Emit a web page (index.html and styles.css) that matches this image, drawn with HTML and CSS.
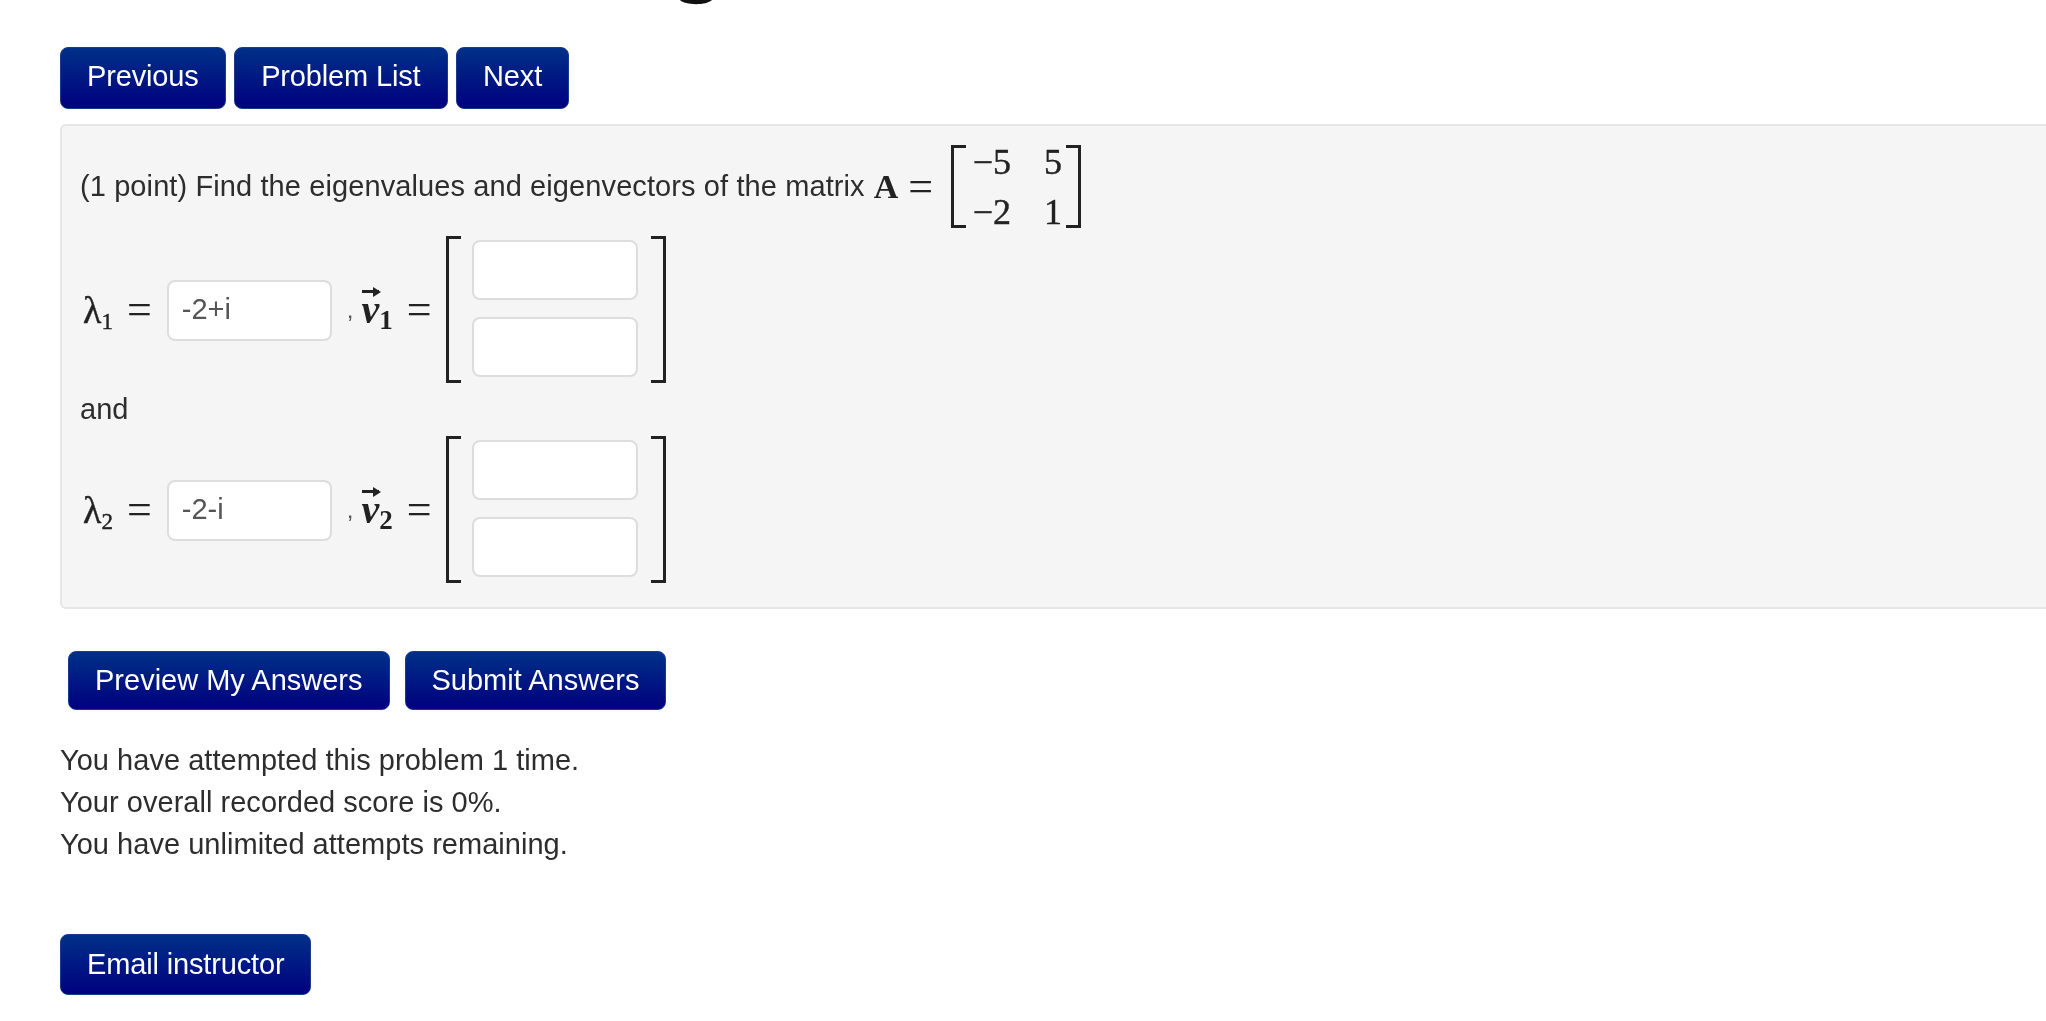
FILE: index.html
```html
<!DOCTYPE html>
<html lang="en">
<head>
<meta charset="utf-8">
<title>Problem</title>
<link rel="stylesheet" href="styles.css">
</head>
<body>
<div class="page">
  <svg class="descender" width="34" height="5" viewBox="0 0 34 5" aria-hidden="true"><path d="M1 0C5 5 27 6 33 0Z" fill="#111"/></svg>
  <nav class="button-row nav-row">
    <a class="btn">Previous</a>
    <a class="btn">Problem List</a>
    <a class="btn">Next</a>
  </nav>
  <section class="well">
    <div class="statement">
      <span class="prompt">(1 point) Find the eigenvalues and eigenvectors of the matrix</span>
      <span class="math bold-a">A</span>
      <span class="math eq">=</span>
      <div class="matrix bracketed">
        <span>−5</span><span>5</span>
        <span>−2</span><span>1</span>
      </div>
    </div>
    <div class="answer-row">
      <span class="math lambda">λ<sub>1</sub></span>
      <span class="math eq">=</span>
      <input class="answer" value="-2+i">
      <span class="comma">,</span>
      <span class="math vec"><b class="arrowed">v</b><sub>1</sub></span>
      <span class="math eq">=</span>
      <div class="vector bracketed"><input class="answer"><input class="answer"></div>
    </div>
    <p class="and">and</p>
    <div class="answer-row">
      <span class="math lambda">λ<sub>2</sub></span>
      <span class="math eq">=</span>
      <input class="answer" value="-2-i">
      <span class="comma">,</span>
      <span class="math vec"><b class="arrowed">v</b><sub>2</sub></span>
      <span class="math eq">=</span>
      <div class="vector bracketed"><input class="answer"><input class="answer"></div>
    </div>
  </section>
  <div class="button-row submit-row">
    <a class="btn">Preview My Answers</a>
    <a class="btn">Submit Answers</a>
  </div>
  <div class="score">
    <p>You have attempted this problem 1 time.</p>
    <p>Your overall recorded score is 0%.</p>
    <p>You have unlimited attempts remaining.</p>
  </div>
  <a class="btn email">Email instructor</a>
</div>
</body>
</html>
```
FILE: styles.css
```css
* { box-sizing: border-box; }
html, body { margin: 0; height: 100%; background: #fff; overflow: hidden; }
body {
  font-family: "Liberation Sans", Arial, sans-serif;
  font-size: 29px;
  line-height: 42px;
  color: #2d2d2d;
}
.page {
  position: relative;
  height: 1021px;
  width: 2046px;
  overflow: hidden;
  padding: 47px 0 0 60px;
  filter: blur(0.7px);
}
.descender { position: absolute; left: 679px; top: 0; }
.button-row { display: flex; }
.nav-row { gap: 8.5px; }
.btn {
  display: inline-block;
  height: 62px;
  padding: 7px 26px;
  color: #fff;
  white-space: nowrap;
  border: 1px solid #1a3a8c;
  border-radius: 8px;
  background: linear-gradient(to bottom, #003087, #00007f);
}
.nav-row .btn, .email { letter-spacing: -0.15px; }
.well {
  width: 2100px;
  height: 485px;
  margin-top: 15px;
  padding: 19px 18px 0 18px;
  background: #f5f5f5;
  border: 2px solid #e6e6e6;
  border-radius: 6px;
}
.statement { display: flex; align-items: center; height: 83px; }
.prompt { letter-spacing: 0.1px; position: relative; top: -1px; }
.math { font-family: "Liberation Serif", "Times New Roman", serif; font-size: 34px; color: #222; }
.bold-a { font-weight: 700; margin-left: 9px; }
.eq { margin-left: 14px; font-size: 44px; line-height: 1; }
.statement .eq { margin-left: 10px; margin-right: 18px; }
.bracketed { position: relative; }
.bracketed::before, .bracketed::after {
  content: "";
  position: absolute;
  top: 0; bottom: 0;
  width: 12px;
  border: 3px solid #222;
}
.bracketed::before { left: 0; border-right: 0; }
.bracketed::after { right: 0; border-left: 0; }
.matrix {
  display: grid;
  grid-template-columns: 60px 51px;
  justify-items: end;
  height: 83px;
  width: 130px;
  font-family: "Liberation Serif", "Times New Roman", serif;
  font-size: 36px;
  line-height: 50px;
  color: #222;
  align-content: center;
  -webkit-text-stroke: 0.4px #222;
}
.answer-row { display: flex; align-items: center; height: 147px; margin-top: 8px; }
.answer-row + .and + .answer-row { margin-top: 6px; }
.lambda { margin-left: 3px; font-size: 38px; -webkit-text-stroke: 0.4px #222; }
sub { font-size: 23px; line-height: 0; vertical-align: -6px; }
.vec sub { font-size: 27px; }
.answer {
  display: block;
  width: 165px;
  height: 61px;
  padding: 0 13px 1px;
  font: 29px "Liberation Sans", Arial, sans-serif;
  color: #555;
  background: #fff;
  border: 2px solid #ddd;
  border-radius: 8px;
  outline: none;
}
.answer-row > .answer { margin-left: 15px; margin-top: 1px; }
.comma { margin-left: 15px; color: #555; font-size: 24px; }
.vec { margin-left: 8px; font-weight: 700; font-size: 40px; }
.arrowed { position: relative; font-style: italic; }
.arrowed::before {
  content: "";
  position: absolute;
  left: 1px; right: 0; top: 3px;
  height: 3px;
  background: #222;
}
.arrowed::after {
  content: "";
  position: absolute;
  right: -2px; top: 0;
  border-left: 8px solid #222;
  border-top: 5px solid transparent;
  border-bottom: 5px solid transparent;
}
.vector {
  display: flex;
  flex-direction: column;
  gap: 17px;
  width: 220px;
  margin-left: 14px;
  padding: 4px 27px 6px 26px;
}
.vector .answer { width: 166px; height: 60px; }
.and { margin: 5px 0 0; height: 42px; line-height: 42px; }
.submit-row { gap: 15px; margin-top: 42px; margin-left: 8px; }
.submit-row .btn { height: 59px; padding-top: 7px; }
.score { margin-top: 29px; letter-spacing: 0.03px; }
.score p { margin: 0; }
.email { margin-top: 69px; padding-top: 8px; height: 61px; }
```
